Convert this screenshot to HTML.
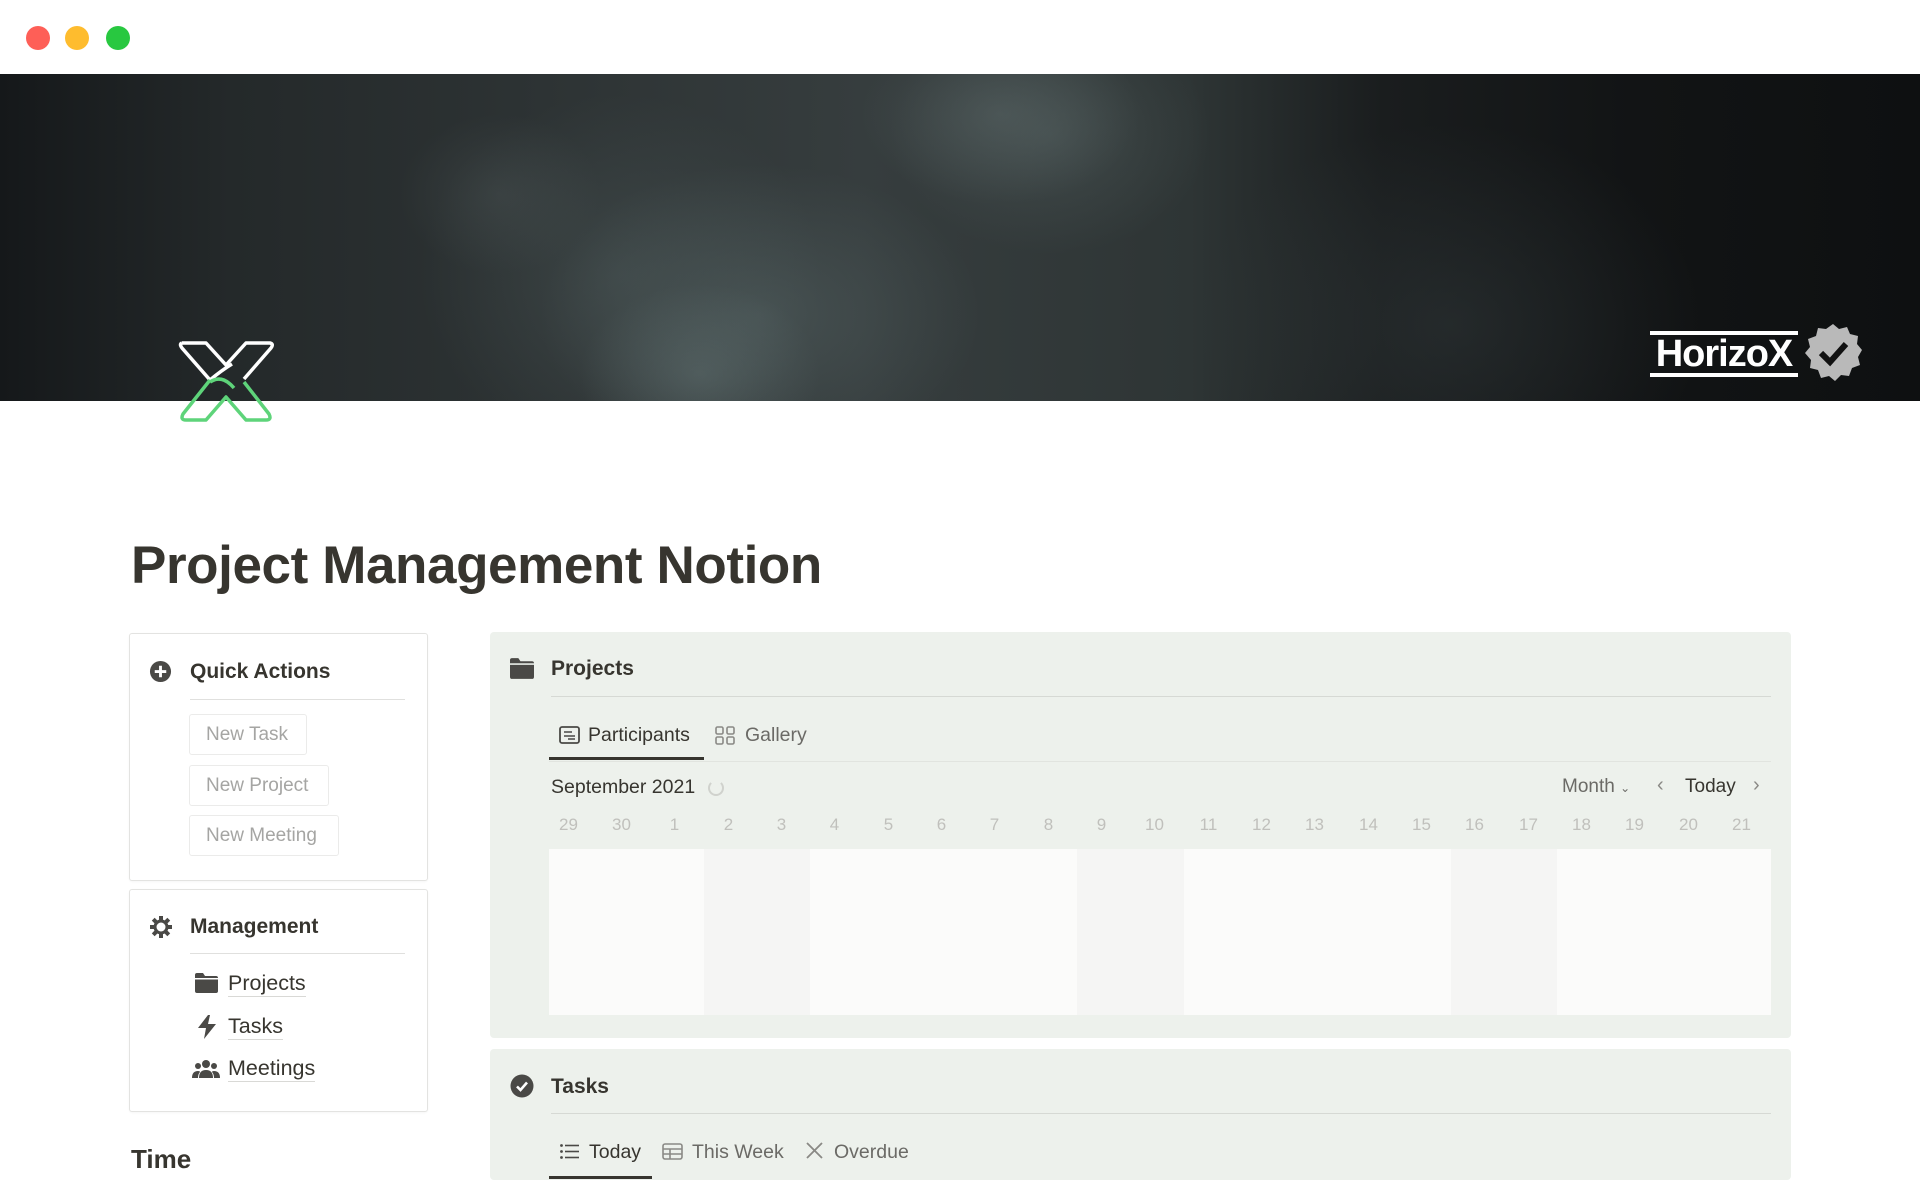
<!DOCTYPE html>
<html><head><meta charset="utf-8"><style>
*{margin:0;padding:0;box-sizing:border-box}
body{width:1920px;height:1200px;background:#fff;font-family:"Liberation Sans",sans-serif;color:#37352f;position:relative;overflow:hidden}
.a{position:absolute}
.dot{position:absolute;top:26px;width:24px;height:24px;border-radius:50%}
.cover{left:0;top:74px;width:1920px;height:327px;background:
radial-gradient(ellipse 120px 90px at 700px 300px,rgba(120,140,140,.3),transparent),
radial-gradient(ellipse 140px 90px at 1000px 40px,rgba(110,125,125,.3),transparent),
radial-gradient(ellipse 100px 80px at 500px 120px,rgba(90,100,100,.25),transparent),
radial-gradient(ellipse 220px 150px at 760px 240px,rgba(110,130,130,.3),transparent),
radial-gradient(ellipse 200px 180px at 620px 200px,rgba(90,105,105,.3),transparent),
radial-gradient(ellipse 160px 120px at 1050px 60px,rgba(100,115,115,.3),transparent),
radial-gradient(ellipse 250px 200px at 1450px 250px,rgba(60,70,72,.35),transparent),
linear-gradient(90deg,#15181a 0%,#24292a 12%,#2e3435 30%,#363d3e 45%,#2e3535 62%,#1a1d1e 72%,#121415 85%,#0e1011 100%)}
.card{position:absolute;border:1px solid #e3e3e1;border-radius:3px;background:#fff;box-shadow:0 1px 2px rgba(0,0,0,.04)}
.h{position:absolute;font-weight:bold;font-size:21px;color:#37352f}
.div{position:absolute;height:1px;background:#e0e0de}
.btn{position:absolute;left:189px;height:41px;border:1px solid #ebebea;border-radius:3px;color:#a5a5a3;font-size:19px;line-height:39px;padding-left:16px}
.lnk{position:absolute;left:228px;font-size:21.5px;color:#37352f;border-bottom:1px solid #d9d9d6;line-height:25px}
.panel{position:absolute;left:490px;width:1301px;background:#edf1ec;border-radius:4px}
.tab{position:absolute;font-size:19.5px;color:#6b6a66}
.num{position:absolute;top:815px;width:53px;text-align:center;font-size:17px;color:#c0c0bc}
</style></head><body>
<div class="dot" style="left:26px;background:#fe5f57"></div>
<div class="dot" style="left:65px;background:#febc2e"></div>
<div class="dot" style="left:106px;background:#28c840"></div>
<div class="a cover"></div>
<svg class="a" style="left:178px;top:340px" width="98" height="84" viewBox="0 0 98 84">
<path d="M4 3 H28 L48 25 L68 3 H92 Q96 4 93 8 L66 39" fill="none" stroke="#fff" stroke-width="3.5" stroke-linejoin="round"/>
<path d="M4 3 Q1 4 4 8 L32 40 M32 40 Q44 30 54 24" fill="none" stroke="#fff" stroke-width="3.5"/>
<path d="M32 40 L5 74 Q2 80 8 80 H28 L48 57 L68 80 H88 Q94 80 91 74 L66 42" fill="none" stroke="#5ed47a" stroke-width="3.5" stroke-linejoin="round"/>
<path d="M32 42 Q44 34 56 48" fill="none" stroke="#5ed47a" stroke-width="3.5"/>
</svg>
<div class="a" style="left:1650px;top:331px;width:148px;height:46px;border-top:4px solid #fff;border-bottom:4px solid #fff;color:#fff;font-weight:bold;font-size:38px;line-height:38px;letter-spacing:-1px;text-align:center">HorizoX</div>
<svg class="a" style="left:1802px;top:322px" width="62" height="62" viewBox="0 0 62 62">
<polygon points="31,2 37,7 45,5 48,12 56,14 55,22 60,28 56,35 58,43 50,46 47,54 39,53 33,59 27,54 19,56 16,48 8,46 9,38 3,31 8,25 6,17 14,14 16,6 24,7" fill="#b9b9b9"/>
<path d="M19 31 L28 40 L44 22" fill="none" stroke="#111" stroke-width="6"/>
</svg>
<div class="a" style="left:131px;top:535px;font-size:53px;font-weight:bold;color:#37352f;letter-spacing:-0.4px">Project Management Notion</div>

<div class="card" style="left:129px;top:633px;width:299px;height:248px"></div>
<svg class="a" style="left:149px;top:660px" width="23" height="23" viewBox="0 0 24 24"><circle cx="12" cy="12" r="11" fill="#4a4946"/><path d="M12 6v12M6 12h12" stroke="#fff" stroke-width="3"/></svg>
<div class="h" style="left:190px;top:660px">Quick Actions</div>
<div class="div" style="left:190px;top:699px;width:215px"></div>
<div class="btn" style="top:714px;width:118px">New Task</div>
<div class="btn" style="top:765px;width:140px">New Project</div>
<div class="btn" style="top:815px;width:150px">New Meeting</div>

<div class="card" style="left:129px;top:889px;width:299px;height:223px"></div>
<svg class="a" style="left:149px;top:915px" width="24" height="24" viewBox="0 0 24 24"><g fill="#4a4946"><circle cx="12" cy="12" r="7.5"/><rect x="10" y="1" width="4" height="22"/><rect x="1" y="10" width="22" height="4"/><rect x="10" y="1" width="4" height="22" transform="rotate(45 12 12)"/><rect x="10" y="1" width="4" height="22" transform="rotate(-45 12 12)"/></g><circle cx="12" cy="12" r="4.5" fill="#fff"/></svg>
<div class="h" style="left:190px;top:915px">Management</div>
<div class="div" style="left:190px;top:953px;width:215px"></div>
<svg class="a" style="left:195px;top:973px" width="23" height="20" viewBox="0 0 23 20"><path d="M0 2 Q0 0 2 0 H8 L10 3 H21 Q23 3 23 5 V18 Q23 20 21 20 H2 Q0 20 0 18Z" fill="#4a4946"/><rect x="0" y="5" width="23" height="1.5" fill="#fff"/></svg>
<div class="lnk" style="top:971px">Projects</div>
<svg class="a" style="left:197px;top:1015px" width="20" height="24" viewBox="0 0 20 24"><path d="M11 0 L1 13 H9 L7 24 L19 9 H11 L13 0Z" fill="#4a4946"/></svg>
<div class="lnk" style="top:1014px">Tasks</div>
<svg class="a" style="left:192px;top:1060px" width="28" height="18" viewBox="0 0 28 18"><g fill="#4a4946"><circle cx="14" cy="4" r="4"/><circle cx="6" cy="6" r="3"/><circle cx="22" cy="6" r="3"/><path d="M7 18 Q7 10 14 10 Q21 10 21 18Z"/><path d="M0 18 Q0 11 6 11 Q8 11 8 12 Q6 14 6 18Z"/><path d="M28 18 Q28 11 22 11 Q20 11 20 12 Q22 14 22 18Z"/></g></svg>
<div class="lnk" style="top:1056px">Meetings</div>
<div class="a" style="left:131px;top:1144px;font-size:26px;font-weight:bold">Time</div>

<div class="panel" style="top:632px;height:406px"></div>
<svg class="a" style="left:510px;top:658px" width="24" height="21" viewBox="0 0 23 20"><path d="M0 2 Q0 0 2 0 H8 L10 3 H21 Q23 3 23 5 V18 Q23 20 21 20 H2 Q0 20 0 18Z" fill="#4a4946"/><rect x="0" y="5" width="23" height="1.5" fill="#edf1ec"/></svg>
<div class="h" style="left:551px;top:657px">Projects</div>
<div class="div" style="left:551px;top:696px;width:1220px;background:#d6d9d4"></div>
<svg class="a" style="left:559px;top:726px" width="21" height="18" viewBox="0 0 21 18"><rect x="1" y="1" width="19" height="16" rx="2" fill="none" stroke="#4a4946" stroke-width="1.8"/><path d="M5 6h8M5 10h11M9 13h7" stroke="#4a4946" stroke-width="1.6"/></svg>
<div class="tab" style="left:588px;top:724px;color:#37352f">Participants</div>
<svg class="a" style="left:715px;top:726px" width="20" height="19" viewBox="0 0 20 19"><g fill="none" stroke="#8a8985" stroke-width="1.6"><rect x="1" y="1" width="7" height="7" rx="1.5"/><rect x="12" y="1" width="7" height="7" rx="1.5"/><rect x="1" y="11" width="7" height="7" rx="1.5"/><rect x="12" y="11" width="7" height="7" rx="1.5"/></g></svg>
<div class="tab" style="left:745px;top:724px">Gallery</div>
<div class="div" style="left:549px;top:761px;width:1222px;background:#e1e4df"></div>
<div class="a" style="left:549px;top:757px;width:155px;height:3px;background:#37352f"></div>
<div class="a" style="left:551px;top:776px;font-size:19.5px;color:#37352f">September 2021</div>
<div class="a" style="left:708px;top:780px;width:16px;height:16px;border-radius:50%;border:2px solid #d0d2cd;border-top-color:transparent"></div>
<div class="a" style="left:1562px;top:776px;font-size:19px;color:#6b6a66">Month <span style="font-size:12px">&#8964;</span></div>
<div class="a" style="left:1657px;top:774px;font-size:20px;color:#8a8985">&#8249;</div>
<div class="a" style="left:1685px;top:776px;font-size:19px;color:#37352f">Today</div>
<div class="a" style="left:1753px;top:774px;font-size:20px;color:#8a8985">&#8250;</div>
<div class="a" style="left:549px;top:849px;width:1222px;height:166px;background:linear-gradient(90deg,#fbfbfa 0 155px,#f5f5f4 155px 261px,#fbfbfa 261px 528px,#f5f5f4 528px 635px,#fbfbfa 635px 902px,#f5f5f4 902px 1008px,#fbfbfa 1008px)"></div>

<div class="panel" style="top:1049px;height:131px"></div>
<svg class="a" style="left:510px;top:1074px" width="24" height="24" viewBox="0 0 24 24"><circle cx="12" cy="12" r="11.5" fill="#4a4946"/><path d="M7 12.5 L10.5 16 L17 8.5" fill="none" stroke="#fff" stroke-width="2.6"/></svg>
<div class="h" style="left:551px;top:1075px">Tasks</div>
<div class="div" style="left:551px;top:1113px;width:1220px;background:#d6d9d4"></div>
<svg class="a" style="left:560px;top:1144px" width="19" height="15" viewBox="0 0 19 15"><g fill="#4a4946"><circle cx="1.5" cy="1.5" r="1.4"/><circle cx="1.5" cy="7.5" r="1.4"/><circle cx="1.5" cy="13.5" r="1.4"/><rect x="5" y="0.7" width="14" height="1.6"/><rect x="5" y="6.7" width="14" height="1.6"/><rect x="5" y="12.7" width="14" height="1.6"/></g></svg>
<div class="tab" style="left:589px;top:1141px;color:#37352f">Today</div>
<svg class="a" style="left:662px;top:1143px" width="21" height="17" viewBox="0 0 21 17"><g fill="none" stroke="#8a8985" stroke-width="1.6"><rect x="1" y="1" width="19" height="15" rx="2"/><path d="M1 6h19M1 11h19M8 6v10"/></g></svg>
<div class="tab" style="left:692px;top:1141px">This Week</div>
<svg class="a" style="left:806px;top:1142px" width="17" height="17" viewBox="0 0 17 17"><path d="M1 1L16 16M16 1L1 16" stroke="#8a8985" stroke-width="1.8"/></svg>
<div class="tab" style="left:834px;top:1141px">Overdue</div>
<div class="a" style="left:549px;top:1176px;width:103px;height:3px;background:#37352f"></div>
<div class="a" style="left:0;top:1180px;width:1920px;height:20px;background:#fff"></div>

<div class="num" style="left:542px">29</div><div class="num" style="left:595px">30</div><div class="num" style="left:648px">1</div><div class="num" style="left:702px">2</div><div class="num" style="left:755px">3</div><div class="num" style="left:808px">4</div><div class="num" style="left:862px">5</div><div class="num" style="left:915px">6</div><div class="num" style="left:968px">7</div><div class="num" style="left:1022px">8</div><div class="num" style="left:1075px">9</div><div class="num" style="left:1128px">10</div><div class="num" style="left:1182px">11</div><div class="num" style="left:1235px">12</div><div class="num" style="left:1288px">13</div><div class="num" style="left:1342px">14</div><div class="num" style="left:1395px">15</div><div class="num" style="left:1448px">16</div><div class="num" style="left:1502px">17</div><div class="num" style="left:1555px">18</div><div class="num" style="left:1608px">19</div><div class="num" style="left:1662px">20</div><div class="num" style="left:1715px">21</div>
</body></html>
